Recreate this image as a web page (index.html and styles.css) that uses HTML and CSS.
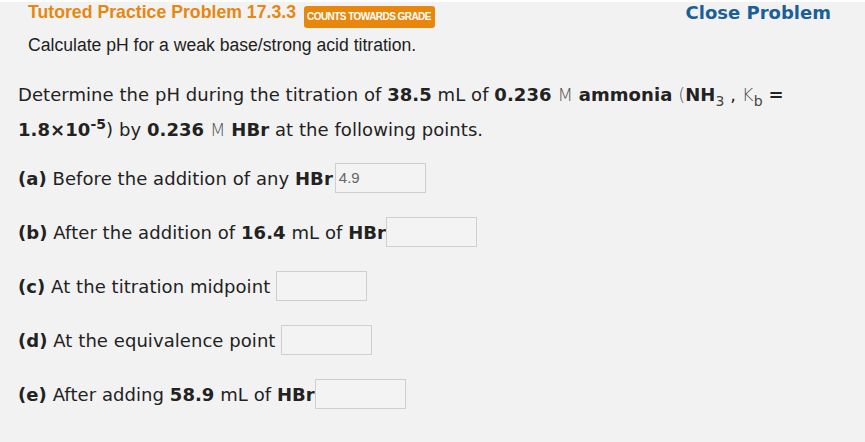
FILE: index.html
```html
<!DOCTYPE html>
<html>
<head>
<meta charset="utf-8">
<link rel="stylesheet" href="styles.css">
</head>
<body>
<div class="page">
  <header class="head">
    <div class="head-left">
      <div class="title-row">
        <span class="title">Tutored Practice Problem 17.3.3</span>
        <span class="badge">COUNTS TOWARDS GRADE</span>
      </div>
      <div class="subtitle">Calculate pH for a weak base/strong acid titration.</div>
    </div>
    <a class="close">Close Problem</a>
  </header>
  <div class="body">
    <p class="intro">Determine the pH during the titration of <b>38.5</b> mL of <b>0.236</b> <span class="thin">M</span> <b>ammonia</b> <span class="thin">(</span><b>NH<sub>3</sub></b> , <span class="thin">K<sub>b</sub></span> <b>=</b><br><b>1.8&times;10<sup>-5</sup></b>) by <b>0.236</b> <span class="thin">M</span> <b>HBr</b> at the following points.</p>
    <div class="q"><span><b>(a)</b> Before the addition of any <b>HBr</b></span><span class="box first">4.9</span></div>
    <div class="q"><span><b>(b)</b> After the addition of <b>16.4</b> mL of <b>HBr</b></span><span class="box"></span></div>
    <div class="q"><span><b>(c)</b> At the titration midpoint</span><span class="box gap"></span></div>
    <div class="q"><span><b>(d)</b> At the equivalence point</span><span class="box gap"></span></div>
    <div class="q"><span><b>(e)</b> After adding <b>58.9</b> mL of <b>HBr</b></span><span class="box"></span></div>
  </div>
</div>
</body>
</html>
```
FILE: styles.css
```css
html, body { margin: 0; padding: 0; }
body {
  background: #f2f2f2;
  border-top: 2px solid #ffffff;
  height: 440px;
  overflow: hidden;
  color: #222;
}
.page { padding: 0 34px 0 18px; }
.head {
  display: flex;
  justify-content: space-between;
  align-items: flex-start;
}
.head-left { padding-left: 10px; }
.title-row { display: flex; align-items: center; height: 24px; }
.title {
  font-family: "Liberation Sans", Arial, sans-serif;
  font-weight: bold;
  font-size: 17.7px;
  color: #e8860f;
  margin-top: -4px;
}
.badge {
  margin-left: 8px;
  margin-top: 6px;
  background: #e8870b;
  color: #fff;
  font-family: "Liberation Sans", Arial, sans-serif;
  font-weight: bold;
  font-size: 10px;
  letter-spacing: -0.55px;
  padding: 0 4px 0 3px;
  height: 22px;
  line-height: 22px;
  border-radius: 3px;
}
.subtitle {
  font-family: "Liberation Sans", Arial, sans-serif;
  font-size: 17.6px;
  color: #1e1e1e;
  margin-top: 9px;
}
.close {
  font-family: "DejaVu Sans", Verdana, sans-serif;
  font-weight: bold;
  font-size: 18px;
  color: #1b5f98;
}
.body {
  font-family: "DejaVu Sans", Verdana, sans-serif;
  font-size: 18px;
  letter-spacing: 0.06px;
  color: #222;
}
.intro { margin: 21px 0 0; line-height: 35px; }
.thin { font-weight: 300; color: #555; }
sub, sup { font-size: 14px; line-height: 0; }
sub { font-weight: normal; color: #444; }
.q {
  display: flex;
  align-items: center;
  height: 30px;
  margin-top: 24px;
}
.q:first-of-type { margin-top: 16px; }
.box {
  display: inline-block;
  width: 86px;
  height: 28px;
  border: 1px solid #cfcfcf;
  background: #f3f3f3;
  font-family: "Liberation Sans", Arial, sans-serif;
  font-size: 15px;
  letter-spacing: 0;
  color: #666;
  line-height: 28px;
  padding-left: 3px;
  box-sizing: content-box;
}
.box.first { margin-left: 2px; }
.box.gap { margin-left: 6px; }
```
